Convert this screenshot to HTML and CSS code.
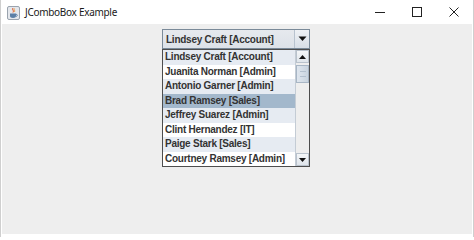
FILE: index.html
```html
<!DOCTYPE html>
<html>
<head>
<meta charset="utf-8">
<link rel="stylesheet" href="styles.css">
</head>
<body>
<div class="window">
  <div class="titlebar">
    <svg class="app-icon" width="13" height="14" viewBox="0 0 13 14">
      <rect x="0.5" y="0.5" width="12" height="13" rx="1.5" fill="#e4e7ec" stroke="#9aa3ae"/>
      <path d="M6 2 C4.5 3.5 7.5 4.5 6 6.5" stroke="#e05a2a" stroke-width="1" fill="none"/>
      <path d="M7.5 2.5 C6.5 3.8 8.5 4.5 7.5 6" stroke="#e8902a" stroke-width="0.8" fill="none"/>
      <path d="M3 7.5 H9 V10 C9 11.3 8 12 6 12 C4 12 3 11.3 3 10 Z" fill="#5b7fa6"/>
      <path d="M9 8.2 C10.8 8.2 10.8 10.4 9 10.4" stroke="#5b7fa6" stroke-width="0.9" fill="none"/>
    </svg>
    <span class="title">JComboBox Example</span>
    <div class="controls">
      <svg class="ctl" width="12" height="12" viewBox="0 0 12 12"><path d="M1 6.5 H11" stroke="#222" stroke-width="1"/></svg>
      <svg class="ctl" width="12" height="12" viewBox="0 0 12 12"><rect x="1.5" y="1.5" width="9" height="9" fill="none" stroke="#222" stroke-width="1"/></svg>
      <svg class="ctl" width="12" height="12" viewBox="0 0 12 12"><path d="M1.5 1.5 L10.5 10.5 M10.5 1.5 L1.5 10.5" stroke="#222" stroke-width="1"/></svg>
    </div>
  </div>
  <div class="content">
    <div class="combo-wrap">
      <div class="combo">
        <span class="combo-text">Lindsey Craft [Account]</span>
        <span class="combo-btn">
          <svg width="9" height="6" viewBox="0 0 9 6"><path d="M0.5 0.5 H8.5 L4.5 5 Z" fill="#111"/></svg>
        </span>
      </div>
      <div class="popup">
        <div class="list">
          <div class="row alt">Lindsey Craft [Account]</div>
          <div class="row">Juanita Norman [Admin]</div>
          <div class="row alt">Antonio Garner [Admin]</div>
          <div class="row sel">Brad Ramsey [Sales]</div>
          <div class="row alt">Jeffrey Suarez [Admin]</div>
          <div class="row">Clint Hernandez [IT]</div>
          <div class="row alt">Paige Stark [Sales]</div>
          <div class="row">Courtney Ramsey [Admin]</div>
        </div>
        <div class="scrollbar">
          <div class="sb-btn">
            <svg width="7" height="4" viewBox="0 0 7 4"><path d="M3.5 0 L7 4 H0 Z" fill="#111"/></svg>
          </div>
          <div class="sb-track">
            <div class="sb-thumb">
              <span class="grip"></span>
            </div>
          </div>
          <div class="sb-btn">
            <svg width="7" height="4" viewBox="0 0 7 4"><path d="M0 0 H7 L3.5 4 Z" fill="#111"/></svg>
          </div>
        </div>
      </div>
    </div>
  </div>
</div>
</body>
</html>
```
FILE: styles.css
```css
html, body {
  margin: 0;
  padding: 0;
  background: #ffffff;
}
.window {
  width: 474px;
  height: 237px;
  box-sizing: border-box;
  border-left: 1px solid #cfcfcf;
  border-right: 1px solid #cfcfcf;
  display: flex;
  flex-direction: column;
  background: #ffffff;
}
.titlebar {
  height: 24px;
  display: flex;
  align-items: center;
  padding-left: 6px;
  font-family: "Noto Sans", "Open Sans", sans-serif;
  font-size: 10px;
  color: #1a1a1a;
}
.app-icon {
  margin-right: 5px;
  margin-top: 1px;
}
.title {
  letter-spacing: -0.3px;
}
.controls {
  margin-left: auto;
  display: flex;
  align-items: center;
  gap: 25px;
  padding-right: 13px;
}
.ctl {
  display: block;
}
.content {
  flex: 1;
  background: #eeeeee;
  margin: 0 1px 3px 1px;
  display: flex;
  justify-content: center;
  padding-top: 5px;
}
.combo-wrap {
  position: relative;
  width: 148px;
  height: 20px;
  margin-right: 2px;
}
.combo {
  box-sizing: border-box;
  width: 148px;
  height: 20px;
  border: 1px solid #7a8a99;
  background: linear-gradient(#e6e9ee, #dde2e8);
  display: flex;
  align-items: stretch;
  font-family: "Liberation Sans", Arial, sans-serif;
  font-weight: bold;
  font-size: 10px;
  letter-spacing: -0.25px;
  color: #333333;
}
.combo-text {
  flex: 1;
  display: flex;
  align-items: center;
  padding-left: 3px;
}
.combo-btn {
  width: 14px;
  border-left: 1px solid #b8c3cf;
  background: linear-gradient(#eef1f5, #d8dfe7);
  display: flex;
  align-items: center;
  justify-content: center;
}
.popup {
  position: absolute;
  left: 0;
  top: 20px;
  width: 148px;
  height: 118px;
  box-sizing: border-box;
  border: 1px solid #4d4d4d;
  background: #ffffff;
  display: flex;
}
.list {
  flex: 1;
  font-family: "Liberation Sans", Arial, sans-serif;
  font-weight: bold;
  font-size: 10px;
  letter-spacing: -0.25px;
  color: #333333;
}
.row {
  height: 14.5px;
  line-height: 14.5px;
  padding-left: 2px;
  background: #ffffff;
  white-space: nowrap;
}
.row.alt {
  background: #e6ebf2;
}
.row.sel {
  background: #a3b8cc;
}
.scrollbar {
  width: 13px;
  display: flex;
  flex-direction: column;
  border-left: 1px solid #c4ccd5;
  background: #eeeeee;
}
.sb-btn {
  height: 13px;
  box-sizing: border-box;
  border: 1px solid #b9c2cc;
  background: linear-gradient(#f4f6f8, #dfe5eb);
  display: flex;
  align-items: center;
  justify-content: center;
}
.sb-track {
  flex: 1;
  padding-top: 2px;
  background: #eeeeee;
}
.sb-thumb {
  height: 18px;
  box-sizing: border-box;
  border: 1px solid #a8b6c5;
  background: linear-gradient(90deg, #dfe6ee, #c9d4df);
  display: flex;
  align-items: center;
  justify-content: center;
}
.grip {
  width: 6px;
  height: 4px;
  border-top: 1px solid #b3c0ce;
  border-bottom: 1px solid #b3c0ce;
}
```
